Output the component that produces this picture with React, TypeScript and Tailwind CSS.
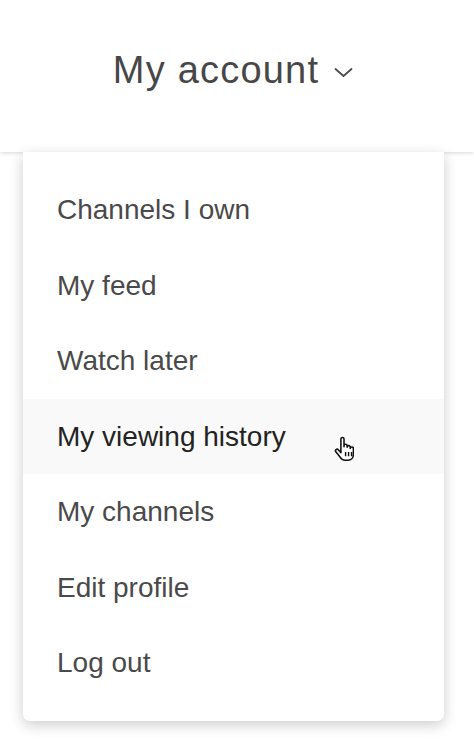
import React from 'react'

const items = [
  'Channels I own',
  'My feed',
  'Watch later',
  'My viewing history',
  'My channels',
  'Edit profile',
  'Log out',
]

function Chevron() {
  return (
    <svg width="19" height="11" viewBox="0 0 19 11" fill="none" className="ml-[15px] mt-[4px]">
      <path d="M1.5 2 L9.5 9 L17.5 2" stroke="#4a4a4a" strokeWidth="1.8" strokeLinecap="round" strokeLinejoin="round" />
    </svg>
  )
}

function HandCursor() {
  return (
    <svg width="21" height="26" viewBox="0 0 16 20" className="absolute left-[310px] top-[37px]">
      <path
        d="M6 10 V2.4 a1.2 1.2 0 0 1 2.4 0 V8.2 V7.6 a1.2 1.2 0 0 1 2.4 0 V8.6 a1.2 1.2 0 0 1 2.4 0 V9.6 a1.2 1.2 0 0 1 2.4 0 V14 c0 2.6 -1.6 4.6 -4.2 4.6 H9.2 c-2 0 -3 -1 -4 -2.6 L2.1 12.1 a1.2 1.2 0 0 1 1.9 -1.5 L6 12.8 Z"
        fill="#fff"
        stroke="#111"
        strokeWidth="1.2"
        strokeLinejoin="round"
      />
      <path d="M9.6 12.4 V15.6 M11.9 12.4 V15.6 M14.2 12.4 V15.6" stroke="#111" strokeWidth="1.1" />
    </svg>
  )
}

export default function App() {
  return (
    <div className="min-h-screen bg-white font-['Liberation_Sans',Arial,sans-serif]">
      <header className="relative h-[152px] bg-white shadow-[0_1px_4px_rgba(0,0,0,0.16)] z-10">
        <div className="flex justify-center pt-[51px] pl-[5px] pr-[13px]">
          <button className="flex items-center text-[38px] leading-[38px] tracking-[1.2px] text-[#474747]">
            My account
            <Chevron />
          </button>
        </div>

        <div className="absolute top-full left-[23px] w-[421px] bg-white rounded-b-[7px] shadow-[0_4px_14px_rgba(0,0,0,0.2)] pt-[20px] pb-[20px]">
          {items.map((label, i) => (
            <div
              key={label}
              className={`relative h-[75.5px] pl-[34px] text-[28px] leading-[75.5px] ${i === 3 ? 'bg-[#f9f9f9] text-[#232323]' : 'text-[#4a4a4a]'}`}
            >
              {label}
              {i === 3 && <HandCursor />}
            </div>
          ))}
        </div>
      </header>
    </div>
  )
}
